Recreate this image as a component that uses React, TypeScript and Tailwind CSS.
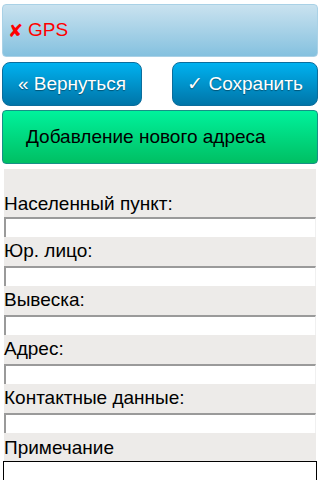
export default function App() {
  const fields = ["Юр. лицо:", "Вывеска:", "Адрес:", "Контактные данные:"];

  return (
    <div className="w-[320px] h-[480px] overflow-hidden bg-white font-['Liberation_Sans',Arial,sans-serif]">
      <div className="px-[2px] pt-[4px]">
        <div className="h-[53px] flex items-center pl-[5px] rounded-[4px] border border-[#a9d1e6] bg-gradient-to-b from-[#c9e2ef] to-[#84c1df] text-[19px] text-[#ff0000]">
          <span className="font-['DejaVu_Sans',sans-serif] text-[18px] mr-[5px]">✘</span>
          <span>GPS</span>
        </div>

        <div className="mt-[5px] flex justify-between">
          <button className="w-[140px] h-[44px] rounded-[8px] border border-[#0b6d9c] bg-gradient-to-b from-[#00b2f0] to-[#0075a8] text-white text-[19px] [text-shadow:0_1px_1px_rgba(0,0,0,0.4)]">
            « Вернуться
          </button>
          <button className="w-[146px] h-[44px] rounded-[8px] border border-[#0b6d9c] bg-gradient-to-b from-[#00b2f0] to-[#0075a8] text-white text-[19px] [text-shadow:0_1px_1px_rgba(0,0,0,0.4)]">
            ✓ Сохранить
          </button>
        </div>

        <div className="mt-[4px] h-[54px] flex items-center pl-[23px] rounded-[4px] border border-[#178f86] bg-gradient-to-b from-[#00f29c] to-[#00bf63] text-[19px] text-black">
          Добавление нового адреса
        </div>
      </div>

      <div className="mx-[4px] mt-[5px] bg-[#edebe9]">
        <div className="pt-[24px] h-[48px] text-[19px] leading-[22px] text-black">Населенный пункт:</div>
        <div className="h-[20px] bg-white border-t-2 border-l-2 border-t-[#9a9a9a] border-l-[#9a9a9a] border-r border-r-[#f0f0f0]" />
        {fields.map((f) => (
          <div key={f}>
            <div className="h-[29px] pt-[3px] text-[19px] leading-[22px] text-black">{f}</div>
            <div className="h-[20px] bg-white border-t-2 border-l-2 border-t-[#9a9a9a] border-l-[#9a9a9a] border-r border-r-[#f0f0f0]" />
          </div>
        ))}
        <div className="h-[28px] pt-[4px] text-[19px] leading-[22px] text-black">Примечание</div>
      </div>
      <div className="mx-[3px] h-[60px] bg-white border border-black" />
    </div>
  );
}
